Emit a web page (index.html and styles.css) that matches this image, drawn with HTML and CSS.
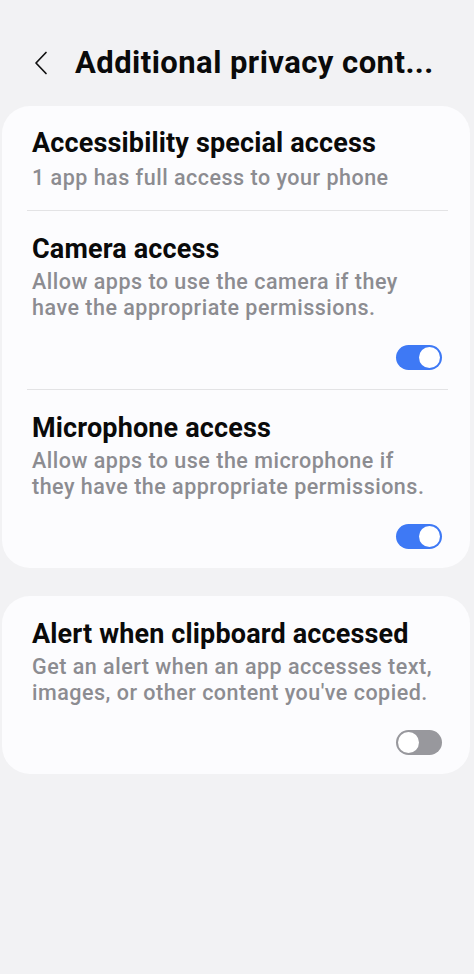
FILE: index.html
```html
<!DOCTYPE html>
<html lang="en">
<head>
<meta charset="utf-8">
<title>Additional privacy controls</title>
<link rel="stylesheet" href="styles.css">
</head>
<body>
<header class="topbar">
  <svg class="back" width="14" height="24" viewBox="0 0 14 24" aria-hidden="true">
    <path d="M12 1.5 L2 12 L12 22.5" fill="none" stroke="#111" stroke-width="1.7" stroke-linecap="round" stroke-linejoin="round"/>
  </svg>
  <h1 class="title">Additional privacy cont...</h1>
</header>

<section class="card">
  <div class="item item-first">
    <div class="item-title">Accessibility special access</div>
    <div class="item-desc">1 app has full access to your phone</div>
  </div>
  <div class="divider"></div>
  <div class="item">
    <div class="item-title">Camera access</div>
    <div class="item-desc">Allow apps to use the camera if they have the appropriate permissions.</div>
    <div class="toggle-row"><span class="toggle on"><span class="knob"></span></span></div>
  </div>
  <div class="divider"></div>
  <div class="item">
    <div class="item-title">Microphone access</div>
    <div class="item-desc">Allow apps to use the microphone if they have the appropriate permissions.</div>
    <div class="toggle-row"><span class="toggle on"><span class="knob"></span></span></div>
  </div>
</section>

<section class="card card-second">
  <div class="item">
    <div class="item-title">Alert when clipboard accessed</div>
    <div class="item-desc">Get an alert when an app accesses text, images, or other content you've copied.</div>
    <div class="toggle-row"><span class="toggle off"><span class="knob"></span></span></div>
  </div>
</section>
</body>
</html>
```

FILE: styles.css
```css
html, body {
  margin: 0;
  padding: 0;
}
body {
  background: #f2f2f4;
  font-family: Roboto, "Noto Sans", "Liberation Sans", sans-serif;
  color: #0a0a0a;
  width: 474px;
  min-height: 974px;
}
.topbar {
  display: flex;
  align-items: center;
  height: 106px;
  box-sizing: border-box;
  padding: 19px 0 0 34px;
}
.back {
  flex: none;
}
.title {
  margin: 0 0 0 27px;
  font-size: 31px;
  font-weight: 700;
  letter-spacing: 0.45px;
  white-space: nowrap;
  line-height: 36px;
}
.card {
  background: #fcfcfe;
  border-radius: 28px;
  margin: 0 4px 0 2px;
  padding: 0 28px 0 30px;
}
.card-second {
  margin-top: 28px;
}
.item {
  padding: 22px 0 19px;
}
.item-first {
  padding: 21px 0 19px;
}
.item-title {
  font-size: 27px;
  line-height: 32px;
  font-weight: 700;
  letter-spacing: 0.15px;
}
.item-desc {
  margin-top: 4px;
  font-size: 21.5px;
  line-height: 26px;
  font-weight: 500;
  letter-spacing: 0.5px;
  color: #8c8c91;
}
.item-first .item-desc {
  margin-top: 6px;
}
.divider {
  height: 1px;
  background: #e3e3e5;
  margin: 0 -6px 0 -5px;
}
.toggle-row {
  display: flex;
  justify-content: flex-end;
  margin-top: 24px;
}
.toggle {
  position: relative;
  display: block;
  width: 46px;
  height: 25px;
  border-radius: 13px;
  box-sizing: border-box;
}
.toggle.on {
  background: #3e79f5;
}
.toggle.off {
  background: #98989d;
}
.knob {
  position: absolute;
  top: 2px;
  width: 21px;
  height: 21px;
  border-radius: 50%;
  background: #fff;
}
.toggle.on .knob {
  right: 2px;
}
.toggle.off .knob {
  left: 2px;
}
```
